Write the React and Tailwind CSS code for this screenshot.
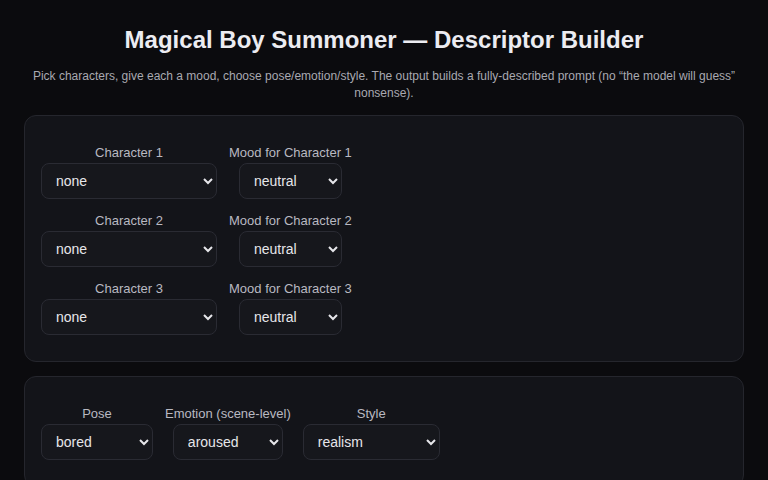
import React from "react";

const font = { fontFamily: '"Liberation Sans", Arial, sans-serif' };

function Field({ label, value, options, width }) {
  return (
    <div className="flex flex-col items-center gap-[2px]">
      <label className="text-[13px] leading-[16px] text-[#b9b9c1] whitespace-nowrap">{label}</label>
      <select
        defaultValue={value}
        className={`${width} h-[36px] rounded-[8px] border border-[#2a2b33] bg-[#16171c] pl-[10px] pr-[4px] text-[14px] text-[#e6e6ea] [color-scheme:dark] outline-none`}
      >
        {options.map((o) => (
          <option key={o} value={o}>{o}</option>
        ))}
      </select>
    </div>
  );
}

export default function App() {
  const chars = ["none", "Aiden", "Kai", "Ren"];
  const moods = ["neutral", "happy", "sad", "angry"];
  return (
    <div className="min-h-screen bg-[#0b0b0e] px-6 pb-6 text-[#e6e6ea]" style={font}>
      <h1 className="pt-[24px] text-center text-[24px] font-bold leading-[32px] text-[#ececf1]">
        Magical Boy Summoner — Descriptor Builder
      </h1>
      <p className="mx-auto mt-[12px] max-w-[710px] text-center text-[12px] leading-[17px] text-[#a9a9b1]">
        Pick characters, give each a mood, choose pose/emotion/style. The output builds a fully-described prompt (no “the model will guess” nonsense).
      </p>
      <div className="mt-[13px] flex flex-col gap-[14px]">
        <div className="rounded-[12px] border border-[#25262d] bg-[#131419] px-4 pt-[29px] pb-[26px]">
          <div className="flex flex-col gap-[14px]">
            {[1, 2, 3].map((n) => (
              <div key={n} className="flex items-start gap-[12px]">
                <Field label={`Character ${n}`} value="none" options={chars} width="w-[176px]" />
                <Field label={`Mood for Character ${n}`} value="neutral" options={moods} width="w-[103px]" />
              </div>
            ))}
          </div>
        </div>
        <div className="rounded-[12px] border border-[#25262d] bg-[#131419] px-4 pt-[29px] pb-[26px]">
          <div className="flex items-start gap-[12px]">
            <Field label="Pose" value="bored" options={["bored", "standing", "sitting"]} width="w-[112px]" />
            <Field label="Emotion (scene-level)" value="aroused" options={["aroused", "calm", "excited"]} width="w-[110px]" />
            <Field label="Style" value="realism" options={["realism", "anime", "watercolor"]} width="w-[137px]" />
          </div>
        </div>
      </div>
    </div>
  );
}
